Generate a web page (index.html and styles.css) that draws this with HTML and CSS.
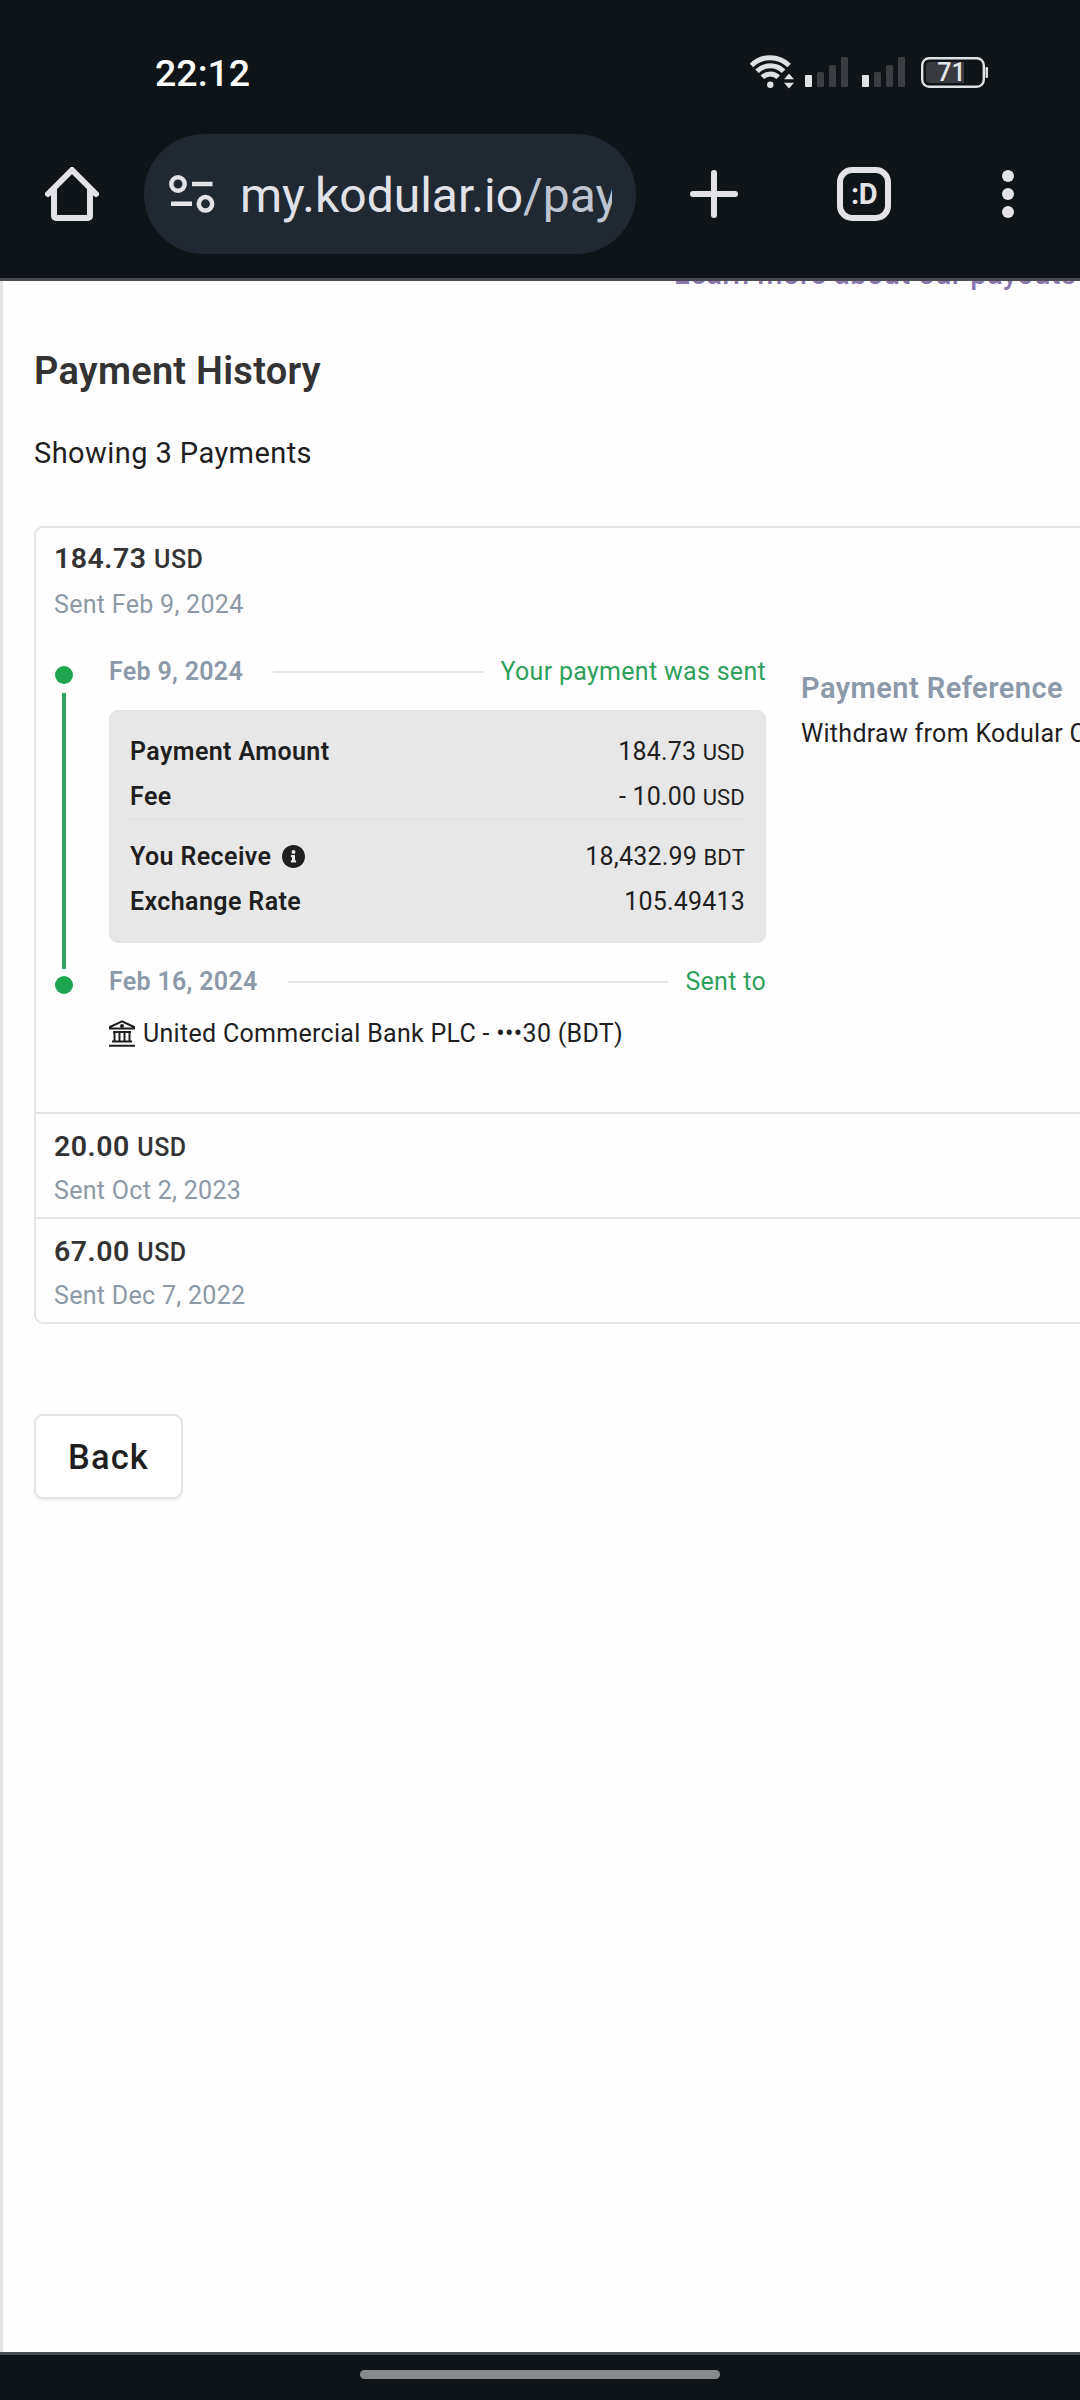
FILE: index.html
```html
<!DOCTYPE html>
<html lang="en">
<head>
<meta charset="utf-8">
<title>Payment History</title>
<link rel="stylesheet" href="styles.css">
</head>
<body>
<div class="phone">
  <header class="chrome">
    <div class="status">
      <span class="clock">22:12</span>
      <svg class="indicators" width="240" height="36" viewBox="750 54 240 36">
        <g fill="none" stroke="#dfe2e4" stroke-width="5">
          <path d="M751.5 65.5a26.6 26.6 0 0 1 37.6 0"/>
          <path d="M757 71.3a18.8 18.8 0 0 1 26.6 0"/>
          <path d="M762.4 77.3a11.2 11.2 0 0 1 15.800 0"/>
        </g>
        <g fill="#dfe2e4">
          <circle cx="770.3" cy="84.7" r="3.2"/>
          <path d="M789 73.5l5 5.800h-10zM789 88.5l5-5.800h-10z"/>
          <rect x="805" y="75" width="7" height="12" rx="1"/>
          <rect x="862" y="75" width="7" height="12" rx="1"/>
        </g>
        <g fill="#3a3d41">
          <rect x="817" y="72" width="7" height="15" rx="1.5"/>
          <rect x="829" y="65" width="7" height="22" rx="1.5"/>
          <rect x="841" y="57" width="7" height="30" rx="1.5"/>
          <rect x="874" y="72" width="7" height="15" rx="1.5"/>
          <rect x="886" y="65" width="7" height="22" rx="1.5"/>
          <rect x="898" y="57" width="7" height="30" rx="1.5"/>
        </g>
        <rect x="922.2" y="58.2" width="61.6" height="28.6" rx="7" fill="none" stroke="#dfe2e4" stroke-width="2.4"/>
        <path d="M964 62h-34a4 4 0 0 0-4 4v13a4 4 0 0 0 4 4h34z" fill="#3a3b40"/>
        <rect x="985.5" y="67" width="2.5" height="11" rx="1" fill="#dfe2e4"/>
        <text class="charge" x="951.500" y="81.3" text-anchor="middle">71</text>
      </svg>
    </div>
    <div class="toolbar">
      <svg class="home" width="54" height="54" viewBox="0 0 54 54" fill="none" stroke="#e3e3e6" stroke-width="6" stroke-linecap="round" stroke-linejoin="round">
        <path d="M3 27L27 3l24 24M9 22v27a2 2 0 0 0 2 2h32a2 2 0 0 0 2-2V22"/>
      </svg>
      <div class="omnibox">
        <svg class="tune" width="46" height="38" viewBox="0 0 46 38" fill="none" stroke="#e3e3e6" stroke-width="4.5">
          <circle cx="9" cy="9" r="6.7"/><circle cx="36.5" cy="28.8" r="6.7"/><path d="M23 9h20.5M2 28.8h21"/>
        </svg>
        <span class="url">my.kodular.io<span class="path">/payments</span></span>
      </div>
      <svg class="plus" width="48" height="48" viewBox="0 0 48 48" stroke="#e3e3e6" stroke-width="6" stroke-linecap="round"><path d="M24 3v42M3 24h42"/></svg>
      <div class="tabs">:D</div>
      <svg class="more" width="12" height="48" viewBox="0 0 12 48" fill="#e3e3e6"><circle cx="6" cy="6" r="6"/><circle cx="6" cy="24" r="6"/><circle cx="6" cy="42" r="6"/></svg>
    </div>
  </header>

  <main class="page">
    <a class="learn">Learn more about our payouts</a>
    <h1 class="title">Payment History</h1>
    <p class="count">Showing 3 Payments</p>

    <section class="card">
      <article class="payment open">
        <div class="amount">184.73 <small>USD</small></div>
        <div class="sent">Sent Feb 9, 2024</div>
        <div class="details">
          <div class="marker"><i class="dot"></i><i class="stem"></i><i class="dot"></i></div>
          <div class="steps">
            <div class="step"><b class="date">Feb 9, 2024</b><i class="rule"></i><span class="state">Your payment was sent</span></div>
            <div class="box">
              <div class="line"><b>Payment Amount</b><span>184.73 <small>USD</small></span></div>
              <div class="line"><b>Fee</b><span>- 10.00 <small>USD</small></span></div>
              <div class="split"></div>
              <div class="line"><b>You Receive <svg class="info" width="23" height="23" viewBox="8 8 496 496"><path fill="#1f1f1f" d="M256 8C119 8 8 119 8 256s111 248 248 248 248-111 248-248S393 8 256 8zm0 110a42 42 0 1 1 0 84 42 42 0 0 1 0-84zm56 254a12 12 0 0 1-12 12h-88a12 12 0 0 1-12-12v-24a12 12 0 0 1 12-12h12v-64h-12a12 12 0 0 1-12-12v-24a12 12 0 0 1 12-12h64a12 12 0 0 1 12 12v100h12a12 12 0 0 1 12 12z"/></svg></b><span>18,432.99 <small>BDT</small></span></div>
              <div class="line"><b>Exchange Rate</b><span>105.49413</span></div>
            </div>
            <div class="step second"><b class="date">Feb 16, 2024</b><i class="rule"></i><span class="state">Sent to</span></div>
            <div class="bank">
              <svg width="26" height="27" viewBox="0 0 26 27" fill="none" stroke="#1f1f1f" stroke-width="2">
                <path d="M1 8.5V7L13 1.3 25 7v1.5zM4 12h18M5.5 12v9M10.5 12v9M15.5 12v9M20.5 12v9M3 21.5h20M0 25.7h26"/><circle cx="13" cy="6" r="1"/>
              </svg>
              <span>United Commercial Bank PLC - •••30 (BDT)</span>
            </div>
          </div>
          <div class="reference"><b class="reftitle">Payment Reference</b><span class="reftext">Withdraw from Kodular Creator</span></div>
        </div>
      </article>
      <article class="payment">
        <div class="amount">20.00 <small>USD</small></div>
        <div class="sent">Sent Oct 2, 2023</div>
      </article>
      <article class="payment">
        <div class="amount">67.00 <small>USD</small></div>
        <div class="sent">Sent Dec 7, 2022</div>
      </article>
    </section>
    <button class="back">Back</button>
  </main>
  <footer class="nav"><div class="handle"></div></footer>
</div>
</body>
</html>
```
FILE: styles.css
```css
* { box-sizing: border-box; }
body { margin: 0; background: #fefefe; font-family: Roboto, "Liberation Sans", sans-serif; font-size: 25px; color: #1f1f1f; }
.phone { width: 1080px; height: 2400px; display: flex; flex-direction: column; overflow: hidden; }

.chrome { height: 281px; flex: none; background: #0f1418; border-bottom: 3px solid #4a4b50; }
.status { height: 134px; padding: 50px 90px 0 155px; display: flex; justify-content: space-between; align-items: flex-start; }
.clock { font-size: 37.5px; line-height: 46px; font-weight: 500; color: #fff; }
.indicators { display: block; margin-top: 4px; }
.charge { font-size: 25px; font-weight: 500; fill: #e3e5e7; }
.toolbar { height: 120px; display: flex; align-items: center; padding: 0 66px 0 45px; }
.omnibox { width: 492px; height: 120px; margin-left: 45px; padding: 0 24px 0 25px; border-radius: 60px; background: #202932; display: flex; align-items: center; gap: 25px; }
.tune { flex: none; }
.url { flex: 1; overflow: hidden; white-space: nowrap; padding-top: 3px; font-size: 48px; line-height: 64px; color: #e1e2e8; }
.path { color: #bfc5d0; }
.plus { margin-left: 54px; }
.tabs { width: 54px; height: 54px; margin-left: 99px; border: 6px solid #e3e3e6; border-radius: 15px; display: flex; align-items: center; justify-content: center; font-size: 29px; line-height: 40px; font-weight: 700; letter-spacing: -0.5px; color: #e3e3e6; }
.more { margin-left: 111px; }

.page { flex: 1; min-height: 0; overflow: hidden; border-left: 3px solid #e3e3e3; padding-left: 31px; display: flex; flex-direction: column; align-items: flex-start; letter-spacing: 0.3px; }
.learn { flex: none; height: 36px; line-height: 36px; margin: -25px 0 0 640px; white-space: nowrap; font-size: 29px; font-weight: 500; letter-spacing: 0.47px; color: #8a76ae; }
.title { margin: 55px 0 0; font-size: 38px; line-height: 48px; font-weight: 600; letter-spacing: 0.25px; color: #333; }
.count { margin: 40px 0 0; font-size: 29px; line-height: 36px; letter-spacing: 0.43px; }

.card { flex: none; width: 1100px; margin-top: 55px; border: 2px solid #e2e4e7; border-radius: 9px; }
.payment { height: 105px; padding: 11px 0 0 18px; border-top: 2px solid #e4e5e8; }
.payment.open { height: 584px; padding-top: 9px; border-top: 0; }
.amount { height: 44px; line-height: 44px; font-size: 28.5px; font-weight: 600; letter-spacing: 0.5px; color: #333; }
.amount small { font-size: 25px; font-weight: 500; }
.sent { height: 44px; line-height: 44px; color: #8c99a6; }
.open .sent { margin-top: 2px; }

.details { display: grid; grid-template-columns: 18px 658px 300px; column-gap: 35px; margin: 23px 0 0 1px; }
.marker { display: flex; flex-direction: column; align-items: center; padding-top: 16px; }
.dot { width: 18px; height: 18px; border-radius: 50%; background: #1ea54f; }
.stem { width: 4px; height: 276px; margin: 9px 0 7px; background: #2fa460; }
.steps { margin-left: 1px; }
.step { display: flex; align-items: center; height: 44px; line-height: 44px; white-space: nowrap; }
.date { font-weight: 600; color: #8c99a8; }
.rule { flex: 1; height: 2px; margin: 0 17px 0 30px; background: #e4e5e7; }
.state { color: #2fa05c; }
.box { height: 233px; margin-top: 16px; padding: 18px 20px 0; border: 1px solid #e1e3e7; border-radius: 9px; background: #e7e7e7; }
.line { display: flex; justify-content: space-between; height: 45px; line-height: 45px; white-space: nowrap; }
.line b { display: flex; align-items: center; gap: 11px; font-weight: 600; letter-spacing: 0.4px; }
.line span { letter-spacing: 0.2px; }
.line small { font-size: 22px; }
.split { height: 2px; margin: -1px -2px 14px; background: #e1e3e7; }
.second { margin-top: 17px; }
.bank { display: flex; align-items: center; gap: 8px; height: 44px; margin-top: 7px; white-space: nowrap; }
.reference { display: flex; flex-direction: column; padding-top: 16px; white-space: nowrap; }
.reftitle { font-size: 29px; line-height: 44px; font-weight: 600; letter-spacing: 0.45px; color: #8c99a8; }
.reftext { margin-top: 2px; line-height: 44px; }

.back { flex: none; width: 149px; height: 85px; margin-top: 90px; padding: 0; border: 2px solid #e3e4e6; border-radius: 9px; background: #fff; box-shadow: 0 2px 3px rgba(0,0,0,.05); font: 500 34.5px/80px Roboto, sans-serif; letter-spacing: 1.1px; color: #1f1f1f; }

.nav { flex: none; height: 48px; border-top: 3px solid #454b4f; background: #0f1418; display: flex; justify-content: center; padding-top: 15px; }
.handle { width: 360px; height: 9px; border-radius: 5px; background: #878b8e; }
```
